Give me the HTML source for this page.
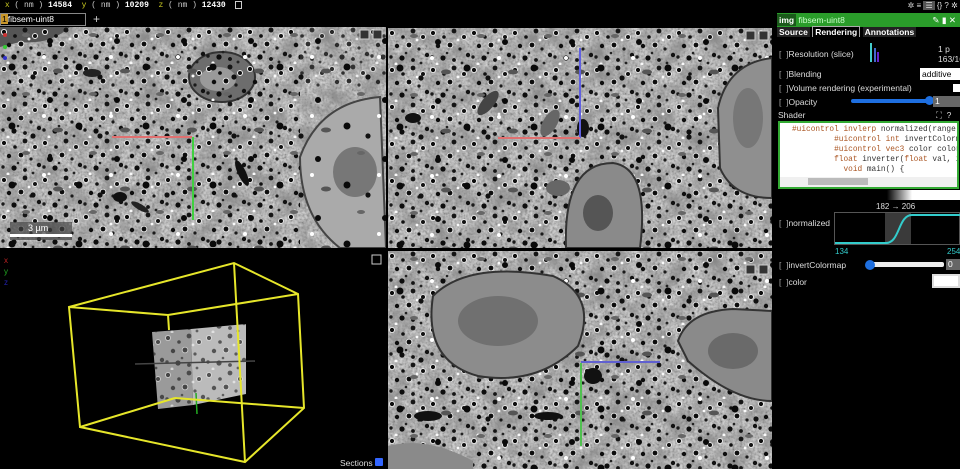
<!DOCTYPE html>
<html><head><meta charset="utf-8">
<style>
*{margin:0;padding:0;box-sizing:border-box}
body{width:960px;height:469px;background:#000;overflow:hidden;position:relative;font-family:"Liberation Sans",sans-serif;color:#fff}
.abs{position:absolute}
.top{left:0;top:0;width:960px;height:12px;background:#000;font-size:8px;line-height:12px;color:#ccc;font-family:"Liberation Mono",monospace}
.top b{font-weight:bold;color:#fff}
.lbl{font-size:8.5px;color:#ddd}
.br{color:#aaa}
</style></head><body>
<svg width="0" height="0" style="position:absolute">
<defs>
<pattern id="d1" width="41" height="37" patternUnits="userSpaceOnUse">
<circle cx="4" cy="5" r="3" fill="#eee"/><circle cx="4" cy="5" r="2.1" fill="#0c0c0c"/>
<circle cx="15" cy="9" r="1.8" fill="#111"/>
<circle cx="25" cy="3" r="2.4" fill="#151515"/>
<circle cx="35" cy="9" r="2.9" fill="#f0f0f0"/><circle cx="35" cy="9" r="2" fill="#111"/>
<circle cx="9" cy="18" r="2.2" fill="#0d0d0d"/>
<circle cx="21" cy="17" r="3.3" fill="#e5e5e5"/><circle cx="21" cy="17" r="2.4" fill="#0c0c0c"/>
<circle cx="31" cy="21" r="1.6" fill="#1a1a1a"/>
<circle cx="39" cy="27" r="2.2" fill="#111"/>
<circle cx="3" cy="29" r="1.7" fill="#1a1a1a"/>
<circle cx="14" cy="30" r="2.6" fill="#0d0d0d"/>
<circle cx="25" cy="32" r="1.9" fill="#141414"/>
<circle cx="33" cy="35" r="1.4" fill="#222"/>
<circle cx="18" cy="25" r="1.3" fill="#222"/>
<circle cx="8" cy="36" r="1.5" fill="#fafafa"/>
<circle cx="29" cy="12" r="1.4" fill="#fafafa"/>
</pattern>
<pattern id="d2" width="67" height="59" patternUnits="userSpaceOnUse">
<circle cx="12" cy="40" r="3.5" fill="#0a0a0a"/>
<circle cx="50" cy="14" r="3" fill="#0a0a0a"/>
<circle cx="33" cy="50" r="2.6" fill="#111"/>
<ellipse cx="58" cy="44" rx="5" ry="2.5" fill="#555"/>
<ellipse cx="26" cy="8" rx="4" ry="2" fill="#666"/>
<circle cx="44" cy="30" r="2" fill="#fff"/>
</pattern>
<filter id="nz" x="0" y="0" width="100%" height="100%">
<feTurbulence type="fractalNoise" baseFrequency="0.4" numOctaves="2" seed="3"/>
<feColorMatrix type="matrix" values="1.4 0 0 0 -0.2  1.4 0 0 0 -0.2  1.4 0 0 0 -0.2  0 0 0 0 0.45"/>
</filter>
<filter id="nz2" x="0" y="0" width="100%" height="100%">
<feTurbulence type="fractalNoise" baseFrequency="0.05" numOctaves="3" seed="7"/>
<feColorMatrix type="matrix" values="0 0 0 0 0.25  0 0 0 0 0.25  0 0 0 0 0.25  2 0 0 0 -0.75"/>
</filter>
</defs>
</svg>

<div class="abs top">&nbsp;<span style="color:#cc2">x</span> ( nm ) <b>14584</b> &nbsp;<span style="color:#cc2">y</span> ( nm ) <b>10209</b> &nbsp;<span style="color:#cc2">z</span> ( nm ) <b>12430</b> &nbsp;<span style="display:inline-block;width:7px;height:8px;border:1px solid #ccc;vertical-align:middle"></span></div>
<div class="abs" style="right:0;top:0;width:90px;height:12px;font-size:8px;line-height:12px;color:#ddd;text-align:right">✲ ≡ <span style="background:#555;padding:0 2px">☰</span> {} ? ✲&nbsp;</div>

<div class="abs" style="left:0;top:13px;width:86px;height:13px;border:1px solid #888;background:#000;font-size:8.5px;line-height:11px"><span style="background:#c8962a;color:#000;padding:0 1px">1</span>fibsem-uint8</div>
<div class="abs" style="left:93px;top:12px;font-size:12px;color:#ccc">+</div>

<!-- top-left panel -->
<svg class="abs" style="left:0;top:27px" width="386" height="221">
<rect width="386" height="221" fill="#b4b4b4"/>
<rect width="386" height="221" filter="url(#nz)"/>
<rect width="386" height="221" filter="url(#nz2)"/>
<ellipse cx="222" cy="50" rx="33" ry="25" fill="#6d6d6d" stroke="#333" stroke-width="2"/>
<ellipse cx="218" cy="52" rx="18" ry="12" fill="#9a9a9a"/>
<path d="M300 130 Q320 75 380 70 L386 221 L340 221 Q300 190 300 130Z" fill="#aaa" stroke="#444" stroke-width="2"/>
<ellipse cx="355" cy="145" rx="22" ry="25" fill="#777"/>
<path d="M0 0 L70 0 Q50 18 20 15 L0 20Z" fill="#555"/>
<rect width="300" height="221" fill="url(#d1)"/>
<rect width="386" height="60" y="0" fill="url(#d1)" opacity=".8"/>
<rect width="386" height="221" fill="url(#d2)"/>
<ellipse cx="92" cy="46" rx="9" ry="4" fill="#222"/>
<ellipse cx="120" cy="170" rx="7" ry="5" fill="#111"/>
<ellipse cx="242" cy="146" rx="4" ry="14" fill="#111" transform="rotate(-25 242 146)"/>
<ellipse cx="140" cy="180" rx="10" ry="3" fill="#222" transform="rotate(30 140 180)"/>
<line x1="112" y1="110" x2="192" y2="110" stroke="#e07070" stroke-width="2"/>
<line x1="193" y1="110" x2="193" y2="193" stroke="#40d040" stroke-width="2"/>
<rect x="10" y="195" width="62" height="18" fill="#444" opacity=".7"/>
<rect x="10" y="207" width="62" height="3" fill="#fff"/>
<text x="28" y="204" font-size="9" fill="#fff" font-family="Liberation Sans">3 µm</text>
<rect x="360" y="3" width="9" height="9" fill="#333" stroke="#ccc"/><rect x="373" y="3" width="9" height="9" fill="#333" stroke="#ccc"/>
<circle cx="5" cy="8" r="2" fill="#c33"/><circle cx="5" cy="20" r="2" fill="#3c3"/><circle cx="5" cy="31" r="2" fill="#33c"/>
</svg>

<!-- top-right panel -->
<svg class="abs" style="left:388px;top:28px" width="384" height="220">
<rect width="384" height="220" fill="#b4b4b4"/>
<rect width="384" height="220" filter="url(#nz)"/>
<rect width="384" height="220" filter="url(#nz2)"/>
<rect width="384" height="220" fill="url(#d1)"/>
<rect width="384" height="220" fill="url(#d2)"/>
<path d="M330 80 Q340 35 384 30 L384 170 Q345 170 332 140Z" fill="#8f8f8f" stroke="#333" stroke-width="2"/>
<ellipse cx="360" cy="90" rx="15" ry="30" fill="#777"/>
<path d="M178 220 Q175 135 225 135 Q262 140 252 220Z" fill="#8a8a8a" stroke="#333" stroke-width="2"/>
<ellipse cx="210" cy="185" rx="15" ry="18" fill="#555"/>
<ellipse cx="162" cy="95" rx="7" ry="15" fill="#666" transform="rotate(30 162 95)"/>
<ellipse cx="170" cy="160" rx="12" ry="8" fill="#666"/>
<ellipse cx="100" cy="75" rx="6" ry="15" fill="#444" transform="rotate(40 100 75)"/>
<ellipse cx="25" cy="90" rx="8" ry="5" fill="#111"/>
<ellipse cx="195" cy="100" rx="6" ry="9" fill="#111"/>
<line x1="192" y1="20" x2="192" y2="110" stroke="#6060e0" stroke-width="2"/>
<line x1="110" y1="110" x2="192" y2="110" stroke="#e07070" stroke-width="2"/>
<rect x="358" y="3" width="9" height="9" fill="#333" stroke="#ccc"/><rect x="371" y="3" width="9" height="9" fill="#333" stroke="#ccc"/>
</svg>

<!-- bottom-left 3D -->
<svg class="abs" style="left:0;top:250px" width="386" height="219">
<rect width="386" height="219" fill="#000"/>
<g transform="translate(0,-250)">
<path d="M152 332 L191 329 L193 405 L158 409Z" fill="#9a9a9a"/>
<path d="M191 329 L246 324 L246 394 L193 405Z" fill="#bbb"/>
<path d="M152 332 L246 324 L246 394 L158 409Z" fill="url(#d1)" opacity=".6"/>
<line x1="135" y1="364" x2="255" y2="361" stroke="#444" stroke-width="1.5"/>
<line x1="196" y1="393" x2="197" y2="414" stroke="#2a2" stroke-width="1.5"/>
<g stroke="#e6e62a" stroke-width="2" fill="none">
<path d="M69 307 L234 263 L298 294 L304 408 L245 462 L80 427 Z"/>
<path d="M69 307 L168 315 L298 294 M168 315 L169 330 M175 398 L304 408 M175 398 L80 427 M234 263 L245 462"/>
</g>
</g>
<text x="4" y="13" font-size="8" fill="#b22">x</text>
<text x="4" y="24" font-size="8" fill="#2a2">y</text>
<text x="4" y="35" font-size="8" fill="#22a">z</text>
<rect x="372" y="5" width="9" height="9" fill="#000" stroke="#ccc"/>
<text x="340" y="216" font-size="8.5" fill="#ddd">Sections</text>
<rect x="375" y="208" width="8" height="8" fill="#36f" rx="1"/>
</svg>

<!-- bottom-right panel -->
<svg class="abs" style="left:388px;top:251px" width="384" height="218">
<rect width="384" height="218" fill="#b4b4b4"/>
<rect width="384" height="218" filter="url(#nz)"/>
<rect width="384" height="218" filter="url(#nz2)"/>
<rect width="384" height="218" fill="url(#d1)"/>
<rect width="384" height="218" fill="url(#d2)"/>
<path d="M45 45 Q80 10 165 25 Q210 45 190 95 Q150 135 90 125 Q35 110 45 45Z" fill="#8c8c8c" stroke="#333" stroke-width="2"/>
<ellipse cx="110" cy="70" rx="40" ry="25" fill="#707070"/>
<path d="M290 90 Q300 60 345 58 L384 60 L384 150 Q345 150 300 110Z" fill="#8a8a8a" stroke="#333" stroke-width="2"/>
<ellipse cx="345" cy="100" rx="25" ry="18" fill="#6a6a6a"/>
<path d="M0 195 Q40 185 85 210 L85 218 L0 218Z" fill="#8a8a8a"/>
<ellipse cx="205" cy="125" rx="9" ry="8" fill="#111"/>
<ellipse cx="40" cy="165" rx="14" ry="5" fill="#111"/>
<ellipse cx="160" cy="165" rx="14" ry="4" fill="#111"/>
<line x1="193" y1="111" x2="272" y2="111" stroke="#6060d0" stroke-width="2"/>
<line x1="193" y1="112" x2="193" y2="195" stroke="#50c050" stroke-width="2"/>
<rect x="358" y="14" width="9" height="9" fill="#333" stroke="#ccc"/><rect x="371" y="14" width="9" height="9" fill="#333" stroke="#ccc"/>
</svg>

<!-- side panel -->
<div class="abs" style="left:775px;top:12px;width:185px;height:457px;background:#000"></div>
<div class="abs" style="left:777px;top:13px;width:183px;height:14px;background:#2a9c2a;font-size:8.5px;line-height:14px"><span style="background:#1a5a1a;padding:1px 2px;font-weight:bold">img</span> <span style="color:#cfc">fibsem-uint8</span><span style="position:absolute;right:4px;color:#fff">✎ ▮ ✕</span></div>
<div class="abs" style="left:777px;top:27px;font-size:8.5px;line-height:11px;font-weight:bold">
<span style="background:#222;padding:0 2px">Source</span> <span style="border:1px solid #aaa;border-bottom:none;padding:0 2px">Rendering</span> <span style="background:#222;padding:0 2px">Annotations</span></div>
<div class="abs lbl" style="left:779px;top:49px"><span class="br">[ &nbsp;]</span>Resolution (slice)</div>
<div class="abs" style="left:870px;top:43px;width:2px;height:19px;background:#4cc"></div>
<div class="abs" style="left:874px;top:48px;width:2px;height:14px;background:#46c"></div>
<div class="abs" style="left:877px;top:52px;width:2px;height:10px;background:#62c"></div>
<div class="abs lbl" style="left:938px;top:44px">1 p<br>163/16</div>
<div class="abs lbl" style="left:779px;top:69px"><span class="br">[ &nbsp;]</span>Blending</div>
<div class="abs" style="left:920px;top:68px;width:40px;height:12px;background:#fff;color:#000;font-size:8.5px;line-height:12px;padding-left:2px">additive ⌄</div>
<div class="abs lbl" style="left:779px;top:83px"><span class="br">[ &nbsp;]</span>Volume rendering (experimental)</div>
<div class="abs" style="left:953px;top:84px;width:7px;height:8px;background:#fff"></div>
<div class="abs lbl" style="left:779px;top:97px"><span class="br">[ &nbsp;]</span>Opacity</div>
<div class="abs" style="left:851px;top:99px;width:80px;height:4px;background:#1e6fe0;border-radius:2px"></div>
<div class="abs" style="left:925px;top:96px;width:9px;height:9px;background:#1e6fe0;border-radius:50%"></div>
<div class="abs" style="left:933px;top:96px;width:27px;height:11px;background:#666;font-size:8.5px;padding-left:2px">1</div>
<div class="abs lbl" style="left:778px;top:110px">Shader</div>
<div class="abs lbl" style="left:936px;top:110px">⛶ &nbsp;?</div>
<div class="abs" style="left:778px;top:121px;width:181px;height:68px;background:#fff;border:2px solid #3a3;font-family:'Liberation Mono',monospace;font-size:7.8px;line-height:10px;white-space:pre;overflow:hidden;padding:2px 0 0 12px;color:#333"><span style="color:#a52">#uicontrol</span> <span style="color:#a52">invlerp</span> normalized(range
         <span style="color:#a52">#uicontrol</span> <span style="color:#a52">int</span> invertColorm
         <span style="color:#a52">#uicontrol</span> <span style="color:#a52">vec3</span> color color
         <span style="color:#a52">float</span> inverter(<span style="color:#a52">float</span> val, i
           <span style="color:#a52">void</span> main() {
<div style="position:absolute;left:0;bottom:0;width:100%;height:10px;background:#f0f0f0"><div style="position:absolute;left:28px;top:1px;width:60px;height:7px;background:#bbb"></div></div></div>
<div class="abs" style="left:834px;top:190px;width:126px;height:10px;background:linear-gradient(90deg,#000 0%,#000 42%,#fff 62%,#fff 100%)"></div>
<div class="abs lbl" style="left:876px;top:202px;font-size:8px">182 → 206</div>
<div class="abs lbl" style="left:779px;top:218px"><span class="br">[ &nbsp;]</span>normalized</div>
<svg class="abs" style="left:834px;top:212px" width="126" height="34">
<rect x="0.5" y="0.5" width="125" height="32" fill="#000" stroke="#555"/>
<rect x="51" y="1" width="26" height="31" fill="#3a3a3a"/>
<path d="M1 31 L52 31 C66 31 64 3 78 3 L126 3" stroke="#3cc" stroke-width="2" fill="none"/>
</svg>
<div class="abs" style="left:835px;top:247px;font-size:8px;color:#3cc">134</div>
<div class="abs" style="left:947px;top:247px;font-size:8px;color:#3cc">254</div>
<div class="abs lbl" style="left:779px;top:260px"><span class="br">[ &nbsp;]</span>invertColormap</div>
<div class="abs" style="left:868px;top:262px;width:76px;height:5px;background:#eee;border-radius:2px"></div>
<div class="abs" style="left:865px;top:260px;width:10px;height:10px;background:#1e6fe0;border-radius:50%"></div>
<div class="abs" style="left:946px;top:259px;width:14px;height:11px;background:#666;font-size:8.5px;padding-left:2px">0</div>
<div class="abs lbl" style="left:779px;top:277px"><span class="br">[ &nbsp;]</span>color</div>
<div class="abs" style="left:932px;top:274px;width:28px;height:14px;background:#ddd;padding:2px"><div style="width:100%;height:100%;background:#fff"></div></div>
</body></html>
